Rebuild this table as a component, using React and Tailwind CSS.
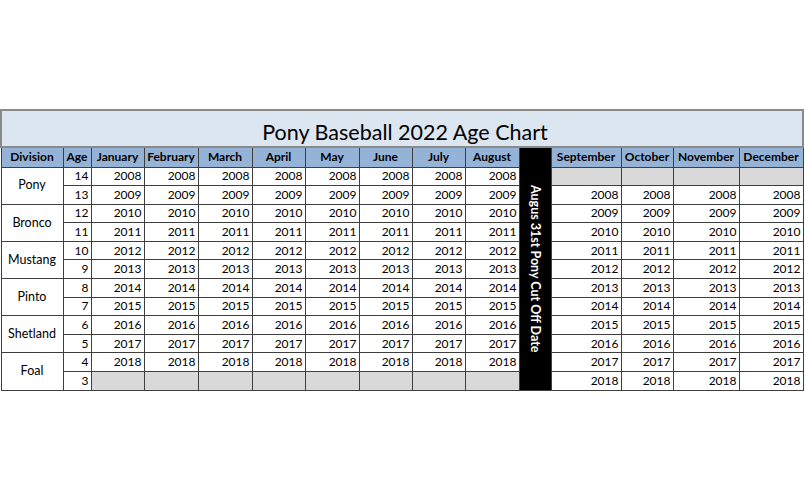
import React from "react";

const months1 = ["January", "February", "March", "April", "May", "June", "July", "August"];
const months2 = ["September", "October", "November", "December"];
const divisions = ["Pony", "Bronco", "Mustang", "Pinto", "Shetland", "Foal"];
const ages = [14, 13, 12, 11, 10, 9, 8, 7, 6, 5, 4, 3];

const cellB = "border border-[#3f3f3f]";

export default function App() {
  return (
    <div className="min-h-[500px] w-[805px] bg-white pt-[109px] font-['Lato',sans-serif] text-black">
      <table className="w-[802px] table-fixed border-collapse">
        <colgroup>
          <col className="w-[62px]" />
          <col className="w-[28px]" />
          <col className="w-[53px]" />
          <col className="w-[54px]" />
          <col className="w-[54px]" />
          <col className="w-[53px]" />
          <col className="w-[54px]" />
          <col className="w-[53px]" />
          <col className="w-[53px]" />
          <col className="w-[54px]" />
          <col className="w-[32px]" />
          <col className="w-[70px]" />
          <col className="w-[52px]" />
          <col className="w-[66px]" />
          <col className="w-[64px]" />
        </colgroup>
        <tbody>
          <tr className="h-[37px]">
            <td
              colSpan={15}
              className="border-2 border-[#8a8a8a] bg-[#dce6f1] pb-[3px] pl-[6px] align-bottom text-center text-[21.5px] leading-none"
            >
              Pony Baseball 2022 Age Chart
            </td>
          </tr>
          <tr className="h-[20px] bg-[#95b3d7] text-[12px] font-bold leading-none">
            <td className={`${cellB} text-center`}>Division</td>
            <td className={`${cellB} text-center`}>Age</td>
            {months1.map((m) => (
              <td key={m} className={`${cellB} text-center`}>
                {m}
              </td>
            ))}
            <td rowSpan={13} className="border border-[#3f3f3f] bg-black p-0 align-middle">
              <div className="flex h-full items-center justify-center">
                <span className="text-[12.5px] font-bold leading-none text-white [writing-mode:vertical-rl]">
                  Augus 31st Pony Cut Off Date
                </span>
              </div>
            </td>
            {months2.map((m) => (
              <td key={m} className={`${cellB} text-center`}>
                {m}
              </td>
            ))}
          </tr>
          {ages.map((age, i) => {
            const y1 = 2022 - age;
            const y2 = 2021 - age;
            return (
              <tr key={age} className="h-[18.6px] text-[12px] leading-none">
                {i % 2 === 0 && (
                  <td rowSpan={2} className={`${cellB} text-center text-[12.5px]`}>
                    {divisions[i / 2]}
                  </td>
                )}
                <td className={`${cellB} pr-[2px] text-right`}>{age}</td>
                {months1.map((m) =>
                  y1 > 2018 ? (
                    <td key={m} className={`${cellB} bg-[#d9d9d9]`} />
                  ) : (
                    <td key={m} className={`${cellB} pr-[2px] text-right`}>
                      {y1}
                    </td>
                  )
                )}
                {months2.map((m) =>
                  y2 < 2008 ? (
                    <td key={m} className={`${cellB} bg-[#d9d9d9]`} />
                  ) : (
                    <td key={m} className={`${cellB} pr-[2px] text-right`}>
                      {y2}
                    </td>
                  )
                )}
              </tr>
            );
          })}
        </tbody>
      </table>
    </div>
  );
}
